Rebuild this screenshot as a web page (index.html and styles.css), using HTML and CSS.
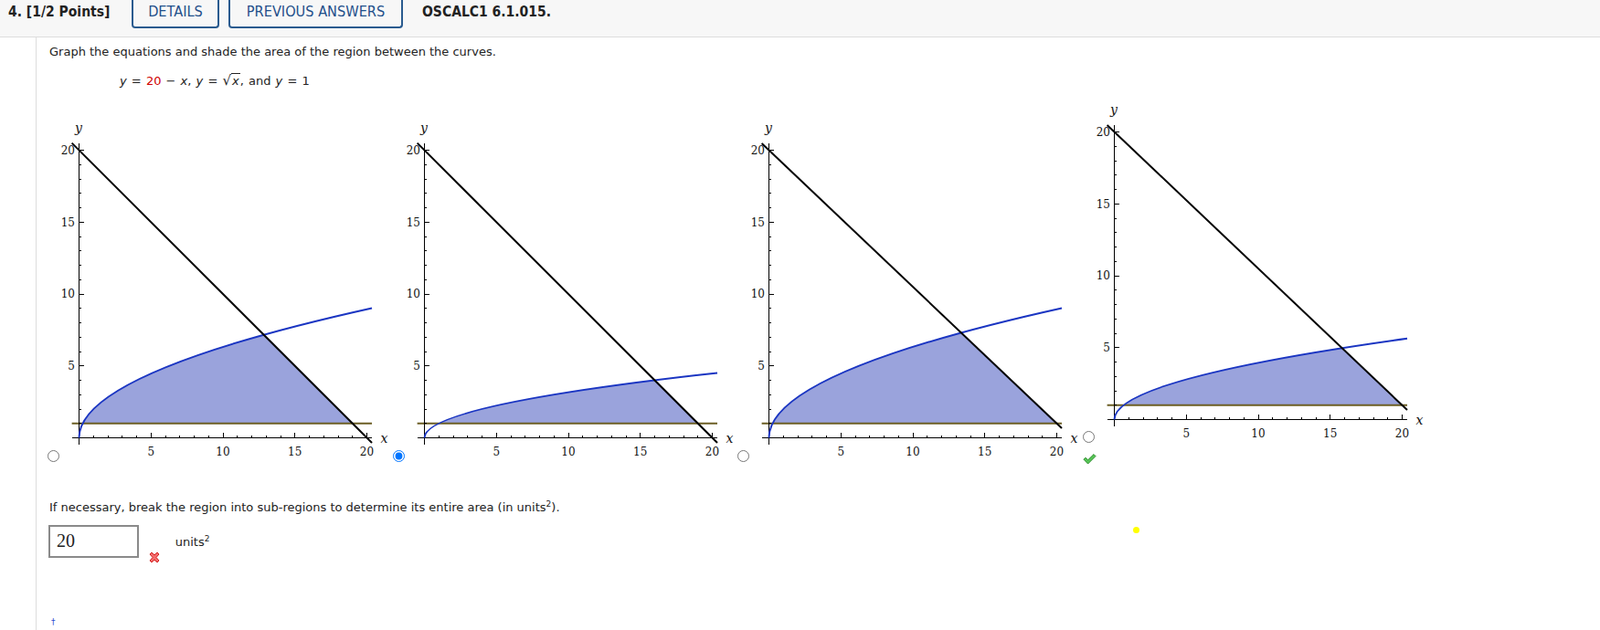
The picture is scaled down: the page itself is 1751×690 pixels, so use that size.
FILE: index.html
```html
<!DOCTYPE html>
<html>
<head>
<meta charset="utf-8">
<title>OSCALC1 6.1.015</title>
<link rel="stylesheet" href="styles.css">
</head>
<body>
<div class="header">
  <span class="qnum">4. [1/2 Points]</span>
  <span class="btn btn-details">DETAILS</span>
  <span class="btn btn-prev">PREVIOUS ANSWERS</span>
  <span class="qid">OSCALC1 6.1.015.</span>
</div>
<div class="content">
  <p class="prompt">Graph the equations and shade the area of the region between the curves.</p>
  <p class="equation"><i>y</i> = <span class="red">20</span> − <i>x</i>, <i>y</i> = <span class="sqrt"><span class="radic">√</span><span class="rad"><i>x</i></span></span>, and <i>y</i> = 1</p>

  <div class="options">
    <label class="option">
      <input type="radio" name="g">
      <svg class="graph" width="360" height="370" viewBox="0 0 360 370">
        <g transform="translate(21.5 349.5) scale(15.75 -15.75)">
          <path class="fill" d="M0.25 1Q1.791 4.083 12.835 7.165L19 1Z"/>
          <path class="base" d="M-0.5 1H20.35"/>
          <path class="axis" d="M-0.5 0H20.35M0 -0.45V20.45"/>
          <path class="axis" d="M1 0V.19M2 0V.19M3 0V.19M4 0V.19M5 0V.32M6 0V.19M7 0V.19M8 0V.19M9 0V.19M10 0V.32M11 0V.19M12 0V.19M13 0V.19M14 0V.19M15 0V.32M16 0V.19M17 0V.19M18 0V.19M19 0V.19M20 0V.32M0 1H.19M0 2H.19M0 3H.19M0 4H.19M0 5H.32M0 6H.19M0 7H.19M0 8H.19M0 9H.19M0 10H.32M0 11H.19M0 12H.19M0 13H.19M0 14H.19M0 15H.32M0 16H.19M0 17H.19M0 18H.19M0 19H.19M0 20H.32"/>
          <path class="curve" d="M0 0Q0 4.511 20.35 9.022"/>
          <path class="line" d="M-0.5 20.5L20.35 -0.35"/>
        </g>
        <g class="nums">
          <text x="17" y="275.1" text-anchor="end">5</text>
          <text x="17" y="196.4" text-anchor="end">10</text>
          <text x="17" y="117.6" text-anchor="end">15</text>
          <text x="17" y="38.9" text-anchor="end">20</text>
          <text x="100.25" y="368.5" text-anchor="middle">5</text>
          <text x="179" y="368.5" text-anchor="middle">10</text>
          <text x="257.75" y="368.5" text-anchor="middle">15</text>
          <text x="336.5" y="368.5" text-anchor="middle">20</text>
        </g>
        <text class="lab" x="21" y="14.6" text-anchor="middle">y</text>
        <text class="lab" x="351.5" y="354.5">x</text>
      </svg>
    </label>

    <label class="option">
      <input type="radio" name="g" checked>
      <svg class="graph" width="360" height="370" viewBox="0 0 360 370">
        <g transform="translate(21.5 349.5) scale(15.75 -15.75)">
          <path class="fill" d="M1 1Q4 2.5 16 4L19 1Z"/>
          <path class="base" d="M-0.5 1H20.35"/>
          <path class="axis" d="M-0.5 0H20.35M0 -0.45V20.45"/>
          <path class="axis" d="M1 0V.19M2 0V.19M3 0V.19M4 0V.19M5 0V.32M6 0V.19M7 0V.19M8 0V.19M9 0V.19M10 0V.32M11 0V.19M12 0V.19M13 0V.19M14 0V.19M15 0V.32M16 0V.19M17 0V.19M18 0V.19M19 0V.19M20 0V.32M0 1H.19M0 2H.19M0 3H.19M0 4H.19M0 5H.32M0 6H.19M0 7H.19M0 8H.19M0 9H.19M0 10H.32M0 11H.19M0 12H.19M0 13H.19M0 14H.19M0 15H.32M0 16H.19M0 17H.19M0 18H.19M0 19H.19M0 20H.32"/>
          <path class="curve" d="M0 0Q0 2.256 20.35 4.511"/>
          <path class="line" d="M-0.5 20.5L20.35 -0.35"/>
        </g>
        <g class="nums">
          <text x="17" y="275.1" text-anchor="end">5</text>
          <text x="17" y="196.4" text-anchor="end">10</text>
          <text x="17" y="117.6" text-anchor="end">15</text>
          <text x="17" y="38.9" text-anchor="end">20</text>
          <text x="100.25" y="368.5" text-anchor="middle">5</text>
          <text x="179" y="368.5" text-anchor="middle">10</text>
          <text x="257.75" y="368.5" text-anchor="middle">15</text>
          <text x="336.5" y="368.5" text-anchor="middle">20</text>
        </g>
        <text class="lab" x="21" y="14.6" text-anchor="middle">y</text>
        <text class="lab" x="351.5" y="354.5">x</text>
      </svg>
    </label>

    <label class="option">
      <input type="radio" name="g">
      <svg class="graph" width="360" height="370" viewBox="0 0 360 370">
        <g transform="translate(21.5 349.5) scale(15.75 -15.75)">
          <path class="fill" d="M0.25 1Q1.8275 4.155 13.358 7.31L20 1Z"/>
          <path class="base" d="M-0.5 1H20.35"/>
          <path class="axis" d="M-0.5 0H20.35M0 -0.45V20.45"/>
          <path class="axis" d="M1 0V.19M2 0V.19M3 0V.19M4 0V.19M5 0V.32M6 0V.19M7 0V.19M8 0V.19M9 0V.19M10 0V.32M11 0V.19M12 0V.19M13 0V.19M14 0V.19M15 0V.32M16 0V.19M17 0V.19M18 0V.19M19 0V.19M20 0V.32M0 1H.19M0 2H.19M0 3H.19M0 4H.19M0 5H.32M0 6H.19M0 7H.19M0 8H.19M0 9H.19M0 10H.32M0 11H.19M0 12H.19M0 13H.19M0 14H.19M0 15H.32M0 16H.19M0 17H.19M0 18H.19M0 19H.19M0 20H.32"/>
          <path class="curve" d="M0 0Q0 4.511 20.35 9.022"/>
          <path class="line" d="M-0.5 20.475L20.35 0.6675"/>
        </g>
        <g class="nums">
          <text x="17" y="275.1" text-anchor="end">5</text>
          <text x="17" y="196.4" text-anchor="end">10</text>
          <text x="17" y="117.6" text-anchor="end">15</text>
          <text x="17" y="38.9" text-anchor="end">20</text>
          <text x="100.25" y="368.5" text-anchor="middle">5</text>
          <text x="179" y="368.5" text-anchor="middle">10</text>
          <text x="257.75" y="368.5" text-anchor="middle">15</text>
          <text x="336.5" y="368.5" text-anchor="middle">20</text>
        </g>
        <text class="lab" x="21" y="14.6" text-anchor="middle">y</text>
        <text class="lab" x="351.5" y="354.5">x</text>
      </svg>
    </label>

    <label class="option option-raised">
      <span class="pick">
        <input type="radio" name="g">
        <svg class="check" width="15" height="12" viewBox="0 0 15 12"><path d="M1 6.2L3 4.2L5.6 6.8L12 0.6L14 2.6L5.6 11Z" fill="#58c658" stroke="#2a8c2a" stroke-width="1" stroke-linejoin="round"/></svg>
      </span>
      <svg class="graph" width="360" height="370" viewBox="0 0 360 370">
        <g transform="translate(21.5 349.5) scale(15.75 -15.75)">
          <path class="fill" d="M0.64 1Q3.182 2.986 15.82 4.972L20 1Z"/>
          <path class="base" d="M-0.5 1H20.35"/>
          <path class="axis" d="M-0.5 0H20.35M0 -0.45V20.45"/>
          <path class="axis" d="M1 0V.19M2 0V.19M3 0V.19M4 0V.19M5 0V.32M6 0V.19M7 0V.19M8 0V.19M9 0V.19M10 0V.32M11 0V.19M12 0V.19M13 0V.19M14 0V.19M15 0V.32M16 0V.19M17 0V.19M18 0V.19M19 0V.19M20 0V.32M0 1H.19M0 2H.19M0 3H.19M0 4H.19M0 5H.32M0 6H.19M0 7H.19M0 8H.19M0 9H.19M0 10H.32M0 11H.19M0 12H.19M0 13H.19M0 14H.19M0 15H.32M0 16H.19M0 17H.19M0 18H.19M0 19H.19M0 20H.32"/>
          <path class="curve" d="M0 0Q0 2.82 20.35 5.639"/>
          <path class="line" d="M-0.5 20.475L20.35 0.6675"/>
        </g>
        <g class="nums">
          <text x="17" y="275.1" text-anchor="end">5</text>
          <text x="17" y="196.4" text-anchor="end">10</text>
          <text x="17" y="117.6" text-anchor="end">15</text>
          <text x="17" y="38.9" text-anchor="end">20</text>
          <text x="100.25" y="368.5" text-anchor="middle">5</text>
          <text x="179" y="368.5" text-anchor="middle">10</text>
          <text x="257.75" y="368.5" text-anchor="middle">15</text>
          <text x="336.5" y="368.5" text-anchor="middle">20</text>
        </g>
        <text class="lab" x="21" y="14.6" text-anchor="middle">y</text>
        <text class="lab" x="351.5" y="354.5">x</text>
      </svg>
    </label>
  </div>

  <p class="note">If necessary, break the region into sub-regions to determine its entire area (in units<sup>2</sup>).</p>

  <div class="answer">
    <input class="answer-box" type="text" value="20" readonly>
    <svg class="xmark" width="14" height="13" viewBox="0 0 14 13"><path d="M2 3L4 1L7 4L10 1L12 3L9 6.5L12 10L10 12L7 9L4 12L2 10L5 6.5Z" fill="#f36b6b" stroke="#d42020" stroke-width="1" stroke-linejoin="round"/></svg>
    <span class="units">units<sup>2</sup></span>
  </div>

  <div class="dagger">†</div>
</div>
<div class="cursor-dot"></div>
</body>
</html>
```

FILE: styles.css
```css
html, body {
  margin: 0;
  padding: 0;
}

body {
  font-family: "DejaVu Sans", Verdana, sans-serif;
  color: #222;
  background: #fff;
  width: 1751px;
  min-height: 690px;
  overflow: hidden;
}

/* ---------- header bar ---------- */
.header {
  height: 40px;
  background: #f7f7f7;
  border-bottom: 1px solid #dddddd;
  display: flex;
  align-items: flex-start;
  font-family: "DejaVu Sans Condensed", "DejaVu Sans", sans-serif;
  font-stretch: condensed;
}

.qnum {
  box-sizing: border-box;
  width: 144px;
  padding: 4px 0 0 9px;
  font-weight: bold;
  font-size: 15.5px;
  line-height: 18px;
  color: #222;
}

.btn {
  box-sizing: border-box;
  height: 31px;
  border: 2px solid #2a5b8f;
  border-top: 0;
  border-radius: 0 0 4px 4px;
  color: #1f4f8a;
  font-size: 16.2px;
  line-height: 18px;
  padding-top: 4px;
  text-align: center;
}

.btn-details {
  width: 96px;
  margin-right: 10px;
}

.btn-prev {
  width: 191px;
  margin-right: 21px;
}

.qid {
  padding-top: 4px;
  font-weight: bold;
  font-size: 15.5px;
  line-height: 18px;
  color: #222;
}

/* ---------- question body ---------- */
.content {
  box-sizing: border-box;
  margin-left: 39px;
  border-left: 1px solid #dddddd;
  padding: 8px 0 0 14px;
  min-height: 649px;
}

.prompt {
  margin: 0;
  font-size: 13px;
  line-height: 16px;
}

.equation {
  margin: 16px 0 0;
  padding-left: 77px;
  font-size: 13px;
  line-height: 16px;
  word-spacing: 1px;
}

.red {
  color: #d00000;
}

.radic {
  font-size: 15px;
  line-height: 0;
}

.rad {
  border-top: 1px solid #222;
  padding: 0 1px;
}

/* ---------- graph options ---------- */
.options {
  display: flex;
  align-items: flex-start;
  gap: 4.5px;
  margin: 13px 0 0 -2px;
}

.option {
  display: flex;
  align-items: flex-end;
  margin-top: 20px;
}

.option-raised {
  margin-top: 0;
}

.option input {
  margin: 0;
  width: 13px;
  height: 13px;
  flex: none;
}

.graph {
  display: block;
  margin-bottom: 5.5px;
  flex: none;
}

.option-raised .graph {
  margin-bottom: 28.7px;
}

.pick {
  display: flex;
  flex-direction: column;
  align-items: flex-start;
  width: 13px;
}

.check {
  display: block;
  margin-top: 11.5px;
  margin-right: -2px;
}

.graph path {
  vector-effect: non-scaling-stroke;
  fill: none;
}

.graph .fill {
  fill: #9aa3dc;
  stroke: none;
}

.graph .base {
  stroke: #6b5e24;
  stroke-width: 2;
}

.graph .axis {
  stroke: #000;
  stroke-width: 1;
  shape-rendering: crispEdges;
}

.graph .curve {
  stroke: #1a35c2;
  stroke-width: 2;
}

.graph .line {
  stroke: #000;
  stroke-width: 2;
}

.graph .nums text {
  font: 12px "DejaVu Serif", serif;
  fill: #111;
}

.graph .lab {
  font: italic 14px "DejaVu Serif", serif;
  fill: #111;
}

/* ---------- answer ---------- */
.note {
  margin: 39.5px 0 0;
  font-size: 13px;
  line-height: 16px;
}

sup {
  font-size: 9px;
  line-height: 0;
  vertical-align: 5px;
}

.answer {
  display: flex;
  align-items: flex-start;
  margin-top: 10.8px;
}

.answer-box {
  box-sizing: border-box;
  width: 99px;
  height: 36px;
  margin: 0 0 0 -1px;
  padding: 0 0 0 7px;
  border: 2px solid #8a8a8a;
  border-radius: 0;
  background: #fff;
  font-family: "Liberation Serif", "Times New Roman", serif;
  font-size: 20px;
  color: #222;
  outline: none;
}

.xmark {
  display: block;
  flex: none;
  margin: 29.3px 0 0 10px;
}

.units {
  margin: 11.5px 0 0 15.7px;
  font-size: 13px;
  line-height: 16px;
}

.dagger {
  margin-top: 57.7px;
  padding-left: 2px;
  font-size: 9px;
  line-height: 12px;
  color: #2a4fd0;
}

.cursor-dot {
  position: absolute;
  left: 1240px;
  top: 577px;
  width: 7px;
  height: 7px;
  border-radius: 50%;
  background: #ffff00;
}
```
